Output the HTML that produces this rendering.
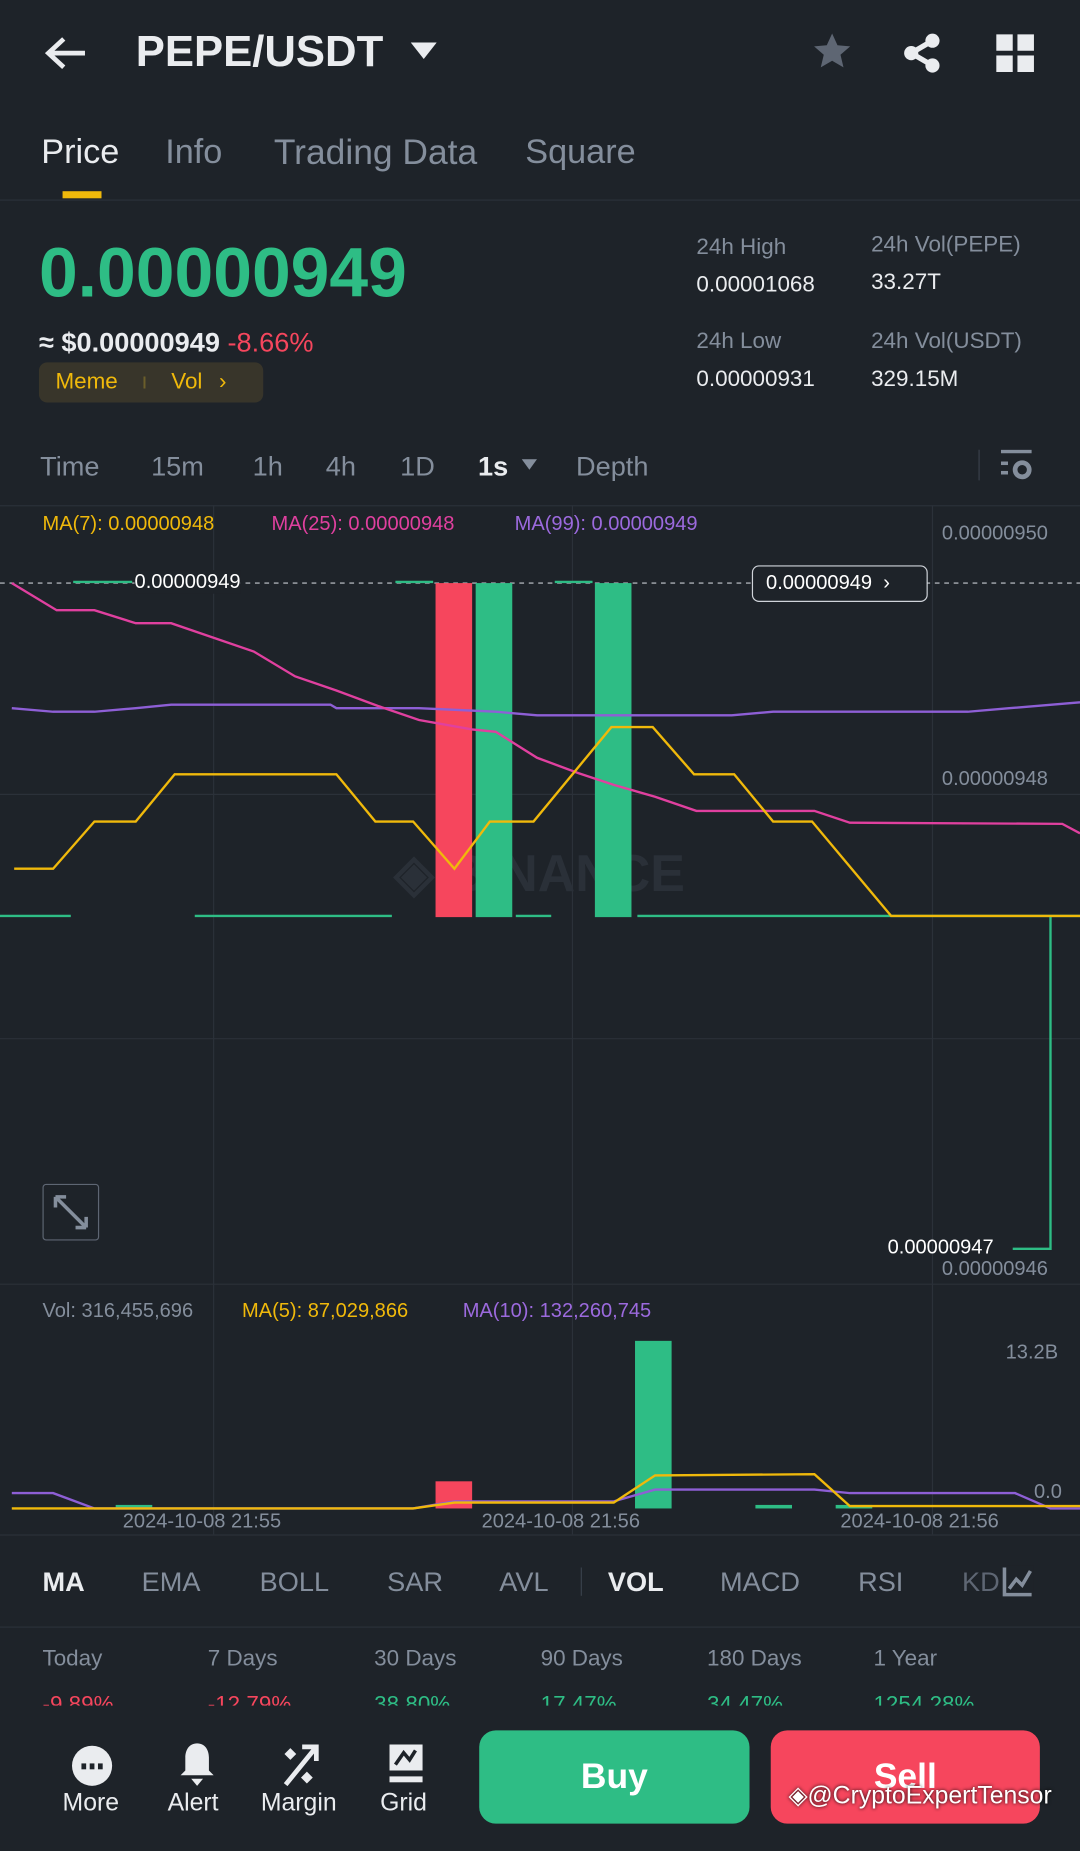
<!DOCTYPE html>
<html><head><meta charset="utf-8"><style>
*{margin:0;padding:0;box-sizing:border-box}
html,body{width:1080px;height:1851px;background:#1e2329;overflow:hidden}
#w{position:absolute;left:0;top:0;width:915px;height:1568px;transform:scale(1.18033);transform-origin:0 0;font-family:"Liberation Sans",sans-serif;color:#eaecef}
.a{position:absolute;white-space:nowrap}
.g{color:#848e9c}
.ln{position:absolute;left:0;width:915px;height:1px;background:#2b3139}
</style></head><body><div id="w">
<svg class="a" style="left:36px;top:28px" width="40" height="34" viewBox="0 0 40 34"><path d="M36 17H6M18 5L5 17l13 12" stroke="#eaecef" stroke-width="4" fill="none"/></svg>
<div class="a" style="left:115px;top:23px;font-size:37px;font-weight:bold">PEPE/USDT</div>
<svg class="a" style="left:348px;top:36px" width="22" height="16"><path d="M0 0h22L11 14z" fill="#eaecef"/></svg>
<svg class="a" style="left:688px;top:27px" width="34" height="34" viewBox="0 0 24 24"><path d="M12 1l3.2 7 7.6.7-5.8 5 1.8 7.5L12 17.3 5.2 21.2 7 13.7 1.2 8.7l7.6-.7z" fill="#5e6673"/></svg>
<svg class="a" style="left:763px;top:27px" width="36" height="36" viewBox="0 0 24 24"><circle cx="18" cy="5" r="4" fill="#eaecef"/><circle cx="6" cy="12" r="4" fill="#eaecef"/><circle cx="18" cy="19" r="4" fill="#eaecef"/><path d="M6 12L18 5M6 12l12 7" stroke="#eaecef" stroke-width="3"/></svg>
<svg class="a" style="left:844px;top:29px" width="32" height="32"><rect x="0" y="0" width="14" height="14" fill="#eaecef"/><rect x="18" y="0" width="14" height="14" fill="#eaecef"/><rect x="0" y="18" width="14" height="14" fill="#eaecef"/><rect x="18" y="18" width="14" height="14" fill="#eaecef"/></svg>
<div class="a" style="left:35px;top:113px;font-size:29px">Price</div>
<div class="a g" style="left:140px;top:113px;font-size:29px">Info</div>
<div class="a g" style="left:232px;top:113px;font-size:30px">Trading Data</div>
<div class="a g" style="left:445px;top:113px;font-size:29px">Square</div>
<div class="a" style="left:53px;top:162px;width:33px;height:6px;background:#f0b90b"></div>
<div class="ln" style="top:169px"></div>
<div class="a" style="left:33px;top:197px;font-size:59px;font-weight:bold;color:#2ebd85">0.00000949</div>
<div class="a" style="left:33px;top:277px;font-size:23px;font-weight:bold">≈ $0.00000949 <span style="color:#f6465d;font-weight:normal">-8.66%</span></div>
<div class="a" style="left:33px;top:307px;width:190px;height:34px;border-radius:7px;background:#38352a;color:#f0b90b;font-size:19px;line-height:34px"><span style="margin-left:14px">Meme</span><span style="margin-left:20px;color:#6b5e2a">ı</span><span style="margin-left:20px">Vol</span><span style="margin-left:14px">›</span></div>
<div class="a g" style="left:590px;top:199px;font-size:19px">24h High</div>
<div class="a" style="left:590px;top:231px;font-size:19px">0.00001068</div>
<div class="a g" style="left:738px;top:197px;font-size:19px">24h Vol(PEPE)</div>
<div class="a" style="left:738px;top:229px;font-size:19px">33.27T</div>
<div class="a g" style="left:590px;top:279px;font-size:19px">24h Low</div>
<div class="a" style="left:590px;top:311px;font-size:19px">0.00000931</div>
<div class="a g" style="left:738px;top:279px;font-size:19px">24h Vol(USDT)</div>
<div class="a" style="left:738px;top:311px;font-size:19px">329.15M</div>
<div class="a g" style="left:34px;top:382px;font-size:23px">Time</div>
<div class="a g" style="left:128px;top:382px;font-size:23px">15m</div>
<div class="a g" style="left:214px;top:382px;font-size:23px">1h</div>
<div class="a g" style="left:276px;top:382px;font-size:23px">4h</div>
<div class="a g" style="left:339px;top:382px;font-size:23px">1D</div>
<div class="a" style="left:405px;top:382px;font-size:23px;font-weight:bold">1s</div>
<svg class="a" style="left:442px;top:389px" width="13" height="10"><path d="M0 0h13L6.5 9z" fill="#848e9c"/></svg>
<div class="a g" style="left:488px;top:382px;font-size:23px">Depth</div>
<div class="a" style="left:829px;top:381px;width:1px;height:26px;background:#3a414b"></div>
<svg class="a" style="left:848px;top:381px" width="28" height="28"><rect x="0" y="0" width="26" height="3" fill="#848e9c"/><rect x="0" y="10" width="6" height="3" fill="#848e9c"/><rect x="0" y="18" width="6" height="3" fill="#848e9c"/><circle cx="18" cy="17" r="6" fill="none" stroke="#848e9c" stroke-width="4"/></svg>
<div class="ln" style="top:428px"></div>
<svg class="a" style="left:0;top:428px" width="915" height="880" viewBox="0 428 915 880">
<g stroke="#2b3139" stroke-width="1"><line x1="181" y1="428" x2="181" y2="1300"/><line x1="485" y1="428" x2="485" y2="1300"/><line x1="790" y1="428" x2="790" y2="1300"/><line x1="0" y1="673" x2="915" y2="673"/><line x1="0" y1="880" x2="915" y2="880"/><line x1="0" y1="1088" x2="915" y2="1088"/></g>
<text x="457" y="755" fill="#2a3038" font-family="Liberation Sans" font-weight="bold" font-size="44" text-anchor="middle">◈ BINANCE</text>
<line x1="0" y1="494" x2="915" y2="494" stroke="#c8ccd2" stroke-dasharray="4 4"/>
<g stroke="#2ebd85" stroke-width="2"><path d="M0 776H60M165 776H332M437 776H467M540 776H915M62 493H112M335 493H367M470 493H502M890 777V1058H858" fill="none"/></g>
<rect x="369" y="494" width="31" height="283" fill="#f6465d"/>
<rect x="403" y="494" width="31" height="283" fill="#2ebd85"/>
<rect x="504" y="494" width="31" height="283" fill="#2ebd85"/>
<polyline fill="none" stroke="#8e5fd6" stroke-width="2" points="10,600 45,603 80,603 115,600 145,597 280,597 285,600 355,600 420,603 455,606 620,606 655,603 820,603 855,600 915,595"/>
<polyline fill="none" stroke="#e0409f" stroke-width="2" points="10,494 48,517 80,517 115,528 145,528 180,540 215,552 250,573 285,585 320,598 355,610 400,618 420,620 455,642 490,655 520,665 555,675 590,687 690,687 720,697 900,698 915,706"/>
<polyline fill="none" stroke="#f0b90b" stroke-width="2" points="12,736 45,736 80,696 115,696 148,656 285,656 318,696 350,696 385,736 415,696 452,696 518,616 553,616 588,656 622,656 655,696 688,696 755,776 915,776"/>
<rect x="369" y="1255" width="31" height="23" fill="#f6465d"/>
<rect x="538" y="1136" width="31" height="142" fill="#2ebd85"/>
<rect x="640" y="1275" width="31" height="3" fill="#2ebd85"/>
<rect x="98" y="1275" width="31" height="3" fill="#2ebd85"/>
<rect x="708" y="1275" width="31" height="3" fill="#2ebd85"/>
<polyline fill="none" stroke="#8e5fd6" stroke-width="2" points="10,1265 45,1265 80,1278 350,1278 385,1272 520,1272 555,1262 690,1262 720,1265 860,1265 890,1278 915,1278"/>
<polyline fill="none" stroke="#f0b90b" stroke-width="2" points="10,1278 350,1278 385,1273 520,1273 555,1250 690,1249 720,1276 915,1276"/>
</svg>
<div class="a" style="left:36px;top:434px;font-size:17px;color:#f0b90b">MA(7): 0.00000948</div>
<div class="a" style="left:230px;top:434px;font-size:17px;color:#e0409f">MA(25): 0.00000948</div>
<div class="a" style="left:436px;top:434px;font-size:17px;color:#9c6ade">MA(99): 0.00000949</div>
<div class="a g" style="left:798px;top:442px;font-size:17px">0.00000950</div>
<div class="a g" style="left:798px;top:650px;font-size:17px">0.00000948</div>
<div class="a g" style="left:798px;top:1065px;font-size:17px">0.00000946</div>
<div class="a" style="left:752px;top:1047px;font-size:17px;color:#fff">0.00000947</div>
<div class="a" style="left:114px;top:483px;font-size:17px;color:#fff;background:#1e2329">0.00000949</div>
<div class="a" style="left:637px;top:479px;width:149px;height:31px;border:1.5px solid #d0d4da;border-radius:6px;background:#1e2329;font-size:17px;color:#fff;line-height:28px;padding-left:11px">0.00000949 &nbsp;›</div>
<div class="a" style="left:36px;top:1003px;width:48px;height:48px;border:1.5px solid #5e6673;border-radius:3px"><svg width="46" height="46" viewBox="0 0 46 46"><path d="M10 10l26 26M10 10v9M10 10h9M36 36h-9M36 36v-9" stroke="#848e9c" stroke-width="3" fill="none"/></svg></div>
<div class="a g" style="left:36px;top:1101px;font-size:17px">Vol: 316,455,696</div>
<div class="a" style="left:205px;top:1101px;font-size:17px;color:#f0b90b">MA(5): 87,029,866</div>
<div class="a" style="left:392px;top:1101px;font-size:17px;color:#9c6ade">MA(10): 132,260,745</div>
<div class="a g" style="left:852px;top:1136px;font-size:17px">13.2B</div>
<div class="a g" style="left:876px;top:1254px;font-size:17px">0.0</div>
<div class="a g" style="left:104px;top:1279px;font-size:17px">2024-10-08 21:55</div>
<div class="a g" style="left:408px;top:1279px;font-size:17px">2024-10-08 21:56</div>
<div class="a g" style="left:712px;top:1279px;font-size:17px">2024-10-08 21:56</div>
<div class="ln" style="top:1300px"></div>
<div class="a" style="left:36px;top:1327px;font-size:23px;font-weight:bold">MA</div>
<div class="a g" style="left:120px;top:1327px;font-size:23px">EMA</div>
<div class="a g" style="left:220px;top:1327px;font-size:23px">BOLL</div>
<div class="a g" style="left:328px;top:1327px;font-size:23px">SAR</div>
<div class="a g" style="left:423px;top:1327px;font-size:23px">AVL</div>
<div class="a" style="left:492px;top:1328px;width:1px;height:24px;background:#3a414b"></div>
<div class="a" style="left:515px;top:1327px;font-size:23px;font-weight:bold">VOL</div>
<div class="a g" style="left:610px;top:1327px;font-size:23px">MACD</div>
<div class="a g" style="left:727px;top:1327px;font-size:23px">RSI</div>
<div class="a" style="left:815px;top:1327px;font-size:23px;color:#5e6673">KD</div>
<svg class="a" style="left:848px;top:1326px" width="28" height="28"><rect x="0" y="0" width="28" height="28" fill="#1e2329"/><path d="M3 2V25H26" stroke="#848e9c" stroke-width="3" fill="none"/><path d="M7 20l6-8 5 5 7-12" stroke="#848e9c" stroke-width="3" fill="none"/></svg>
<div class="ln" style="top:1378px"></div>
<div class="a g" style="left:36px;top:1395px;font-size:19px">Today</div>
<div class="a g" style="left:176px;top:1395px;font-size:19px">7 Days</div>
<div class="a g" style="left:317px;top:1395px;font-size:19px">30 Days</div>
<div class="a g" style="left:458px;top:1395px;font-size:19px">90 Days</div>
<div class="a g" style="left:599px;top:1395px;font-size:19px">180 Days</div>
<div class="a g" style="left:740px;top:1395px;font-size:19px">1 Year</div>
<div class="a" style="left:0;top:1432px;width:915px;height:13px;overflow:hidden;font-size:19px">
<span class="a" style="left:36px;top:2px;color:#f6465d">-9.89%</span><span class="a" style="left:176px;top:2px;color:#f6465d">-12.79%</span><span class="a" style="left:317px;top:2px;color:#2ebd85">38.80%</span><span class="a" style="left:458px;top:2px;color:#2ebd85">17.47%</span><span class="a" style="left:599px;top:2px;color:#2ebd85">34.47%</span><span class="a" style="left:740px;top:2px;color:#2ebd85">1254.28%</span></div>
<svg class="a" style="left:60px;top:1478px" width="36" height="36"><circle cx="18" cy="18" r="17" fill="#eaecef"/><rect x="9" y="16" width="4" height="5" fill="#1e2329"/><rect x="16" y="16" width="4" height="5" fill="#1e2329"/><rect x="23" y="16" width="4" height="5" fill="#1e2329"/></svg>
<svg class="a" style="left:150px;top:1476px" width="34" height="40"><path d="M17 1c7 0 10 6 10 12v11l4 4H3l4-4V13C7 7 10 1 17 1z" fill="#eaecef"/><path d="M12 31h10l-5 6z" fill="#eaecef"/></svg>
<svg class="a" style="left:238px;top:1476px" width="34" height="40"><path d="M4 36L30 4M18 4h12v12" stroke="#eaecef" stroke-width="4" fill="none"/><path d="M8 5l5 5-5 5-5-5z" fill="#eaecef"/><path d="M22 25l5 5-5 5-5-5z" fill="#eaecef"/></svg>
<svg class="a" style="left:328px;top:1476px" width="32" height="40"><path d="M2 2h28v22H2z" fill="#eaecef"/><path d="M7 19l7-10 5 6 5-8" stroke="#1e2329" stroke-width="3" fill="none"/><rect x="2" y="29" width="28" height="5" fill="#eaecef"/></svg>
<div class="a" style="left:53px;top:1516px;font-size:21px">More</div>
<div class="a" style="left:142px;top:1516px;font-size:21px">Alert</div>
<div class="a" style="left:221px;top:1516px;font-size:21px">Margin</div>
<div class="a" style="left:322px;top:1516px;font-size:21px">Grid</div>
<div class="a" style="left:406px;top:1466px;width:229px;height:79px;border-radius:14px;background:#2ebd85;color:#fff;font-size:30px;font-weight:bold;text-align:center;line-height:79px">Buy</div>
<div class="a" style="left:653px;top:1466px;width:228px;height:79px;border-radius:14px;background:#f6465d;color:#fff;font-size:30px;font-weight:bold;text-align:center;line-height:79px">Sell</div>
<div class="a" style="left:668px;top:1509px;font-size:21px;color:#fff;text-shadow:0 0 3px #000">◈@CryptoExpertTensor</div>
</div></body></html>
